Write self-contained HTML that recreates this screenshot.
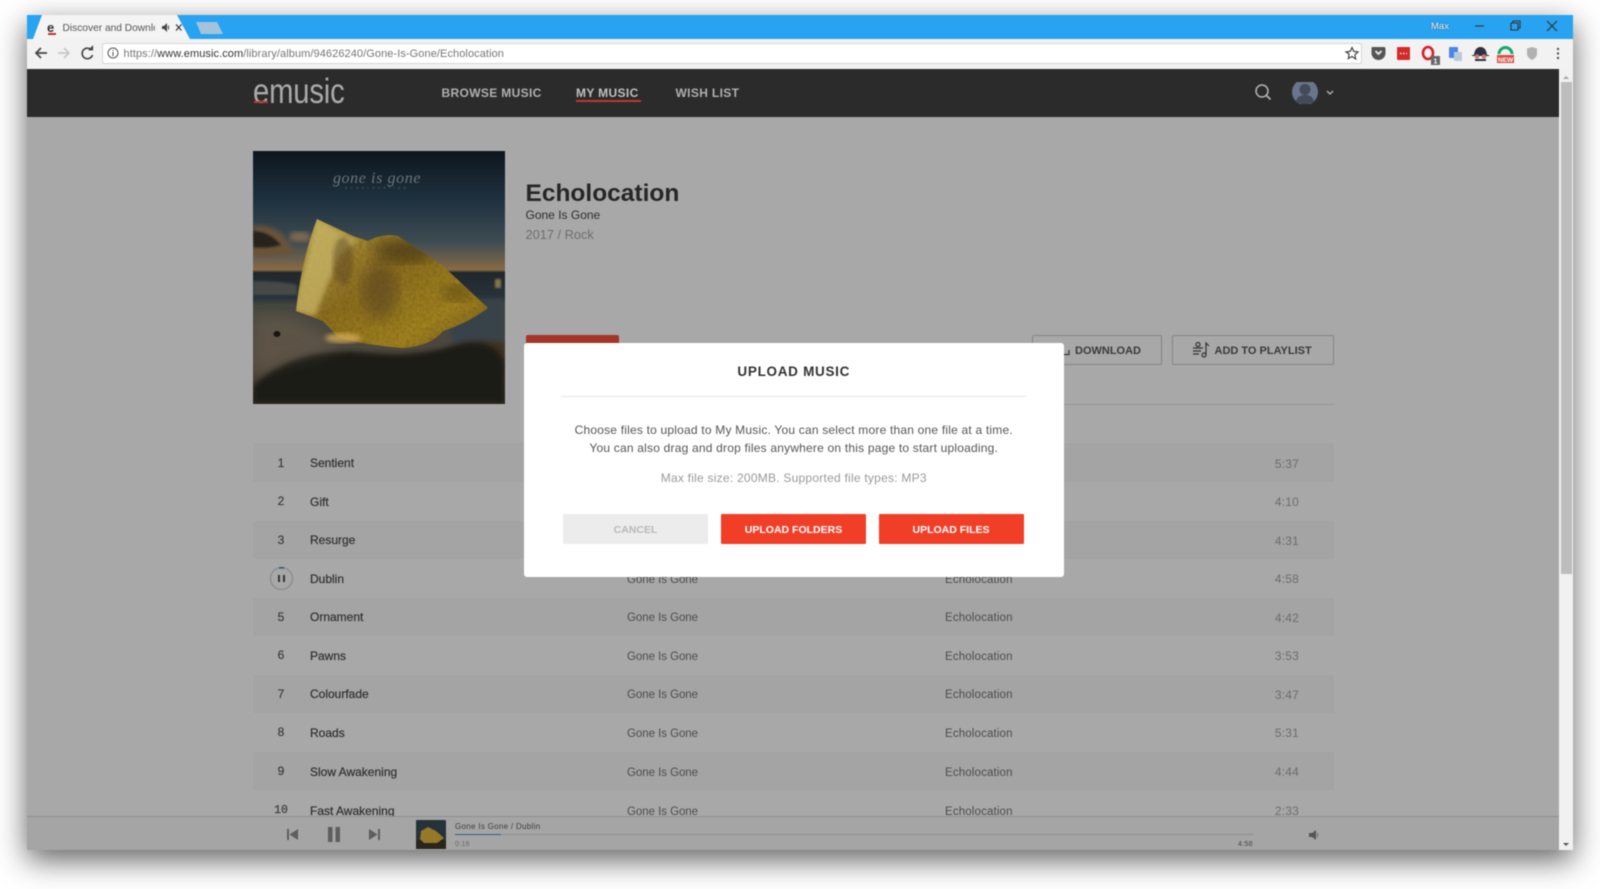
<!DOCTYPE html>
<html><head><meta charset="utf-8"><title>Discover and Download</title>
<style>
html,body{margin:0;padding:0;width:1600px;height:889px;overflow:hidden;background:#fff;font-family:"Liberation Sans",sans-serif}
#stage{position:absolute;left:0;top:0;width:1600px;height:889px;filter:blur(.45px)}
#win{position:absolute;left:27px;top:15px;width:1546px;height:835px;box-shadow:0 10px 28px rgba(0,0,0,.62);background:#a8a8a8}
.a{position:absolute;white-space:nowrap}
.t{position:absolute;white-space:nowrap;line-height:16px;height:16px}
.row{position:absolute;left:253px;width:1081px;height:38.5px}
.title{color:#303030;font-size:12px;left:310px;letter-spacing:0;-webkit-text-stroke:.2px #303030;margin-top:.5px}
.num{color:#3c3c3c;font-size:12px;width:20px;text-align:center;left:271px;-webkit-text-stroke:.2px #3c3c3c}
.art{color:#4c4c4c;font-size:11.5px;left:627px;letter-spacing:-.05px;margin-top:1.5px}
.alb{color:#4c4c4c;font-size:11.5px;left:945px;letter-spacing:.15px;margin-top:1.5px}
.dur{color:#6c6c6c;font-size:12px;width:40px;text-align:right;left:1259px;letter-spacing:.2px}
.nav{color:#b0b0b0;font-size:12px;font-weight:bold;letter-spacing:.35px;top:84.5px}
.btn{position:absolute;box-sizing:border-box;border:1px solid #848484;border-radius:2px;height:30px;top:335px;color:#3a3a3a;font-size:11px;letter-spacing:0;font-weight:bold;line-height:30px}
.mb{position:absolute;top:513.5px;width:145px;height:30.5px;line-height:32.5px;text-align:center;font-size:10.5px;font-weight:bold;border-radius:1px;letter-spacing:0}
</style></head><body>
<div id="stage">
<div id="win"></div>
<!-- tab strip -->
<div class="a" style="left:27px;top:15px;width:1546px;height:24px;background:#27a3f1"></div>
<svg class="a" style="left:27px;top:15px" width="240" height="24">
<path d="M6 24 L15 0 L150 0 L163 24Z" fill="#f4f4f4"/>
<path d="M169 7 L190 7 L196 19 L174 19Z" fill="#a3c3dc"/>
</svg>
<div class="t" style="left:47px;top:20px;width:10px;color:#333;font-size:13px;font-weight:bold">e</div>
<div class="a" style="left:47.5px;top:33px;width:8px;height:1.5px;background:#c7332a"></div>
<div class="t" style="left:62.5px;top:20.500px;color:#555;font-size:10.2px;width:92px;overflow:hidden">Discover and Downlo</div>
<svg class="a" style="left:161px;top:22px" width="30" height="12"><path d="M1 4h2l3-3v9l-3-3H1z" fill="#444"/><path d="M7.5 3.5v4" stroke="#444"/><path d="M15 2.5l5.5 6M20.5 2.5l-5.5 6" stroke="#333" stroke-width="1.2" fill="none"/></svg>
<div class="t" style="left:1431px;top:19px;color:#f4f4f4;font-size:9.500px;text-shadow:0 0 1.500px #345">Max</div>
<svg class="a" style="left:1470px;top:18px" width="95" height="16" fill="none" stroke="#333" stroke-width="1.1">
<path d="M5 8h9"/><path d="M41 5h7v7h-7zM43 5V3h7v7h-2"/><path d="M77 3l10 10M87 3L77 13" stroke-width="1.2"/>
</svg>
<!-- toolbar -->
<div class="a" style="left:27px;top:38.5px;width:1546px;height:30px;background:#f2f2f2"></div>
<svg class="a" style="left:33px;top:44px" width="70" height="18" fill="none" stroke="#444" stroke-width="1.7">
<path d="M14 9H3M8 4L3 9l5 5"/><path d="M36 9H25M31 4l5 5-5 5" stroke="#c8c8c8"/>
<path d="M58 5.5A5.3 5.3 0 1 0 59.500 11" stroke-width="1.6"/><path d="M55.500 5.800h4v-4" stroke-width="1.2" fill="#444"/>
</svg>
<div class="a" style="left:102px;top:42.5px;width:1260px;height:21px;box-sizing:border-box;background:#fff;border:1px solid #d4d4d4;border-radius:2px"></div>
<svg class="a" style="left:106px;top:46px" width="14" height="14"><circle cx="7" cy="7" r="5" fill="none" stroke="#555"/><path d="M7 6v4M7 4v1" stroke="#555" stroke-width="1.1"/></svg>
<div class="t" style="left:123.5px;top:45.5px;color:#777;font-size:11px;letter-spacing:.08px">https://<span style="color:#333">www.emusic.com</span>/library/album/94626240/Gone-Is-Gone/Echolocation</div>
<svg class="a" style="left:1343px;top:44px" width="225" height="22">
<path d="M9 3.5l1.8 3.9 4.2.5-3.1 2.9.8 4.2L9 12.5l-3.7 2 .8-4.2L3 7.9l4.2-.5z" fill="none" stroke="#444" stroke-width="1.2"/>
<path d="M29 3h12q1.500 0 1.500 2v4a7 7 0 0 1-14 0V5q0-2 .5-2z" fill="#555"/><path d="M32.500 7l3 3 3-3" stroke="#eee" stroke-width="1.8" fill="none"/>
<rect x="54" y="3" width="13" height="13" rx="1" fill="#d42a2a"/><path d="M57 9.500h1.500M60 9.500h1.500M63 9.500h1" stroke="#fff" stroke-width="1.300"/>
<ellipse cx="85" cy="9" rx="5" ry="6" fill="none" stroke="#d8202b" stroke-width="2.600"/><rect x="88" y="12" width="9" height="9" fill="#666"/><text x="90.500" y="19.500" font-size="7" font-weight="bold" fill="#fff" font-family="Liberation Sans">1</text>
<rect x="106" y="3" width="9" height="11" rx="1" fill="#4a86e8"/><rect x="111" y="8" width="8" height="9" fill="#bbc9dd"/>
<path d="M131 11q1-8 6.500-8t6.500 8zM129 11h17v1h-17z" fill="#2d3142"/><circle cx="134" cy="12.500" r="2.300" fill="#c77" /><circle cx="141" cy="12.500" r="2.300" fill="#c77"/><path d="M132 16h11" stroke="#2d3142" stroke-width="2"/>
<path d="M156 10a6.500 6.500 0 0 1 13 0" fill="none" stroke="#15a86b" stroke-width="3"/><rect x="154" y="11" width="17" height="8" fill="#dc4b3e"/><text x="155" y="18" font-size="6.500" font-weight="bold" fill="#fff" font-family="Liberation Sans">NEW</text>
<path d="M184 4.500l5-1.500 5 1.500v5q0 4-5 6.500-5-2.500-5-6.500z" fill="#b0b0b0"/>
<circle cx="215" cy="5" r="1.200" fill="#555"/><circle cx="215" cy="9.500" r="1.200" fill="#555"/><circle cx="215" cy="14" r="1.200" fill="#555"/>
</svg>
<!-- nav -->
<div class="a" style="left:27px;top:68.500px;width:1532px;height:48px;background:#2b2b2b"></div>
<div class="t" style="left:253px;top:74px;height:36px;line-height:36px;color:#aaa;font-size:35px;letter-spacing:-.2px;transform-origin:0 50%;transform:scale(.835,1)">emusic</div>
<div class="a" style="left:254px;top:100.500px;width:14px;height:2.500px;background:#b93a30"></div>
<div class="t nav" style="left:441.500px">BROWSE MUSIC</div>
<div class="t nav" style="left:576px;color:#c0c0c0">MY MUSIC</div>
<div class="a" style="left:576px;top:99.500px;width:65px;height:2px;background:#c2362b"></div>
<div class="t nav" style="left:675.500px">WISH LIST</div>
<svg class="a" style="left:1252px;top:82px" width="90" height="22">
<circle cx="10" cy="9" r="6" fill="none" stroke="#b5b5b5" stroke-width="1.500"/><path d="M14.500 13.500l4 4" stroke="#b5b5b5" stroke-width="1.700"/>
<circle cx="53" cy="10" r="13" fill="#69758a"/><circle cx="53" cy="7.500" r="5.500" fill="#434a58"/><path d="M44 20q1-7 9-7t9 7l-9 3z" fill="#434a58"/>
<path d="M75 9l3 3 3-3" fill="none" stroke="#aaa" stroke-width="1.500"/>
</svg>
<!-- scrollbar -->
<div class="a" style="left:1559px;top:68.500px;width:14px;height:781.500px;background:#f1f1f1"></div>
<div class="a" style="left:1560.500px;top:82px;width:11px;height:492px;background:#bdbdbd"></div>
<svg class="a" style="left:1559px;top:70px" width="14" height="780"><path d="M4 9l3-3 3 3z" fill="#a5a5a5"/><path d="M4 773l3 3 3-3z" fill="#555"/></svg>
<!-- album art -->
<svg class="a" style="left:253px;top:151px" width="252" height="253" viewBox="0 0 252 253">
<defs>
<linearGradient id="sky" x1="0" y1="0" x2="0" y2="1"><stop offset="0" stop-color="#0e161d"/><stop offset=".2" stop-color="#1f3240"/><stop offset=".36" stop-color="#3f4c52"/><stop offset=".43" stop-color="#6c5f4c"/><stop offset=".47" stop-color="#8a6a44"/><stop offset=".48" stop-color="#20282d"/><stop offset=".58" stop-color="#28323a"/><stop offset=".61" stop-color="#45463f"/><stop offset=".85" stop-color="#4f483e"/><stop offset="1" stop-color="#38332b"/></linearGradient>
<linearGradient id="rock" x1="0" y1="0" x2="1" y2="1"><stop offset="0" stop-color="#b89f48"/><stop offset=".45" stop-color="#8c6e22"/><stop offset=".75" stop-color="#a08224"/><stop offset="1" stop-color="#6f541a"/></linearGradient>
<filter id="tx" x="0" y="0" width="100%" height="100%"><feTurbulence type="fractalNoise" baseFrequency=".3" numOctaves="2" seed="3"/><feColorMatrix values="0 0 0 0 0 0 0 0 0 0 0 0 0 0 0 .5 0 0 0 -.16"/><feComposite in2="SourceGraphic" operator="in"/><feMerge><feMergeNode in="SourceGraphic"/><feMergeNode/></feMerge></filter>
<filter id="b1"><feGaussianBlur stdDeviation="1"/></filter><filter id="b2"><feGaussianBlur stdDeviation="2.500"/></filter><filter id="b5"><feGaussianBlur stdDeviation="7"/></filter>
<clipPath id="rc"><path d="M64 68L100 85L115 90Q130 82 145 85L190 115L235 157Q215 172 190 180Q178 195 150 197Q110 194 85 186L70 170L43 160Q48 110 64 68Z"/></clipPath>
<clipPath id="all"><rect width="252" height="253"/></clipPath>
</defs>
<g clip-path="url(#all)">
<rect width="252" height="253" fill="url(#sky)"/>
<path d="M0 75q25-3 38 20l3 6q-20 6-41 3z" fill="#6a5238" filter="url(#b2)"/>
<path d="M0 80q16 0 28 14-14 4-28 2z" fill="#27241f" filter="url(#b1)"/>
<path d="M37 82q12-3 20 1v7q-10 2-20-1z" fill="#7c6850" filter="url(#b2)"/>
<path d="M190 148H252V195H200z" fill="#38424a" filter="url(#b2)"/>
<path d="M0 130q30 0 44 4v10H0z" fill="#55544f" opacity=".7" filter="url(#b1)"/>
<path d="M190 200q30-15 62-8v30z" fill="#3c3122" filter="url(#b2)"/>
<path d="M0 235Q25 212 53 205T120 202T200 195T252 212V253H0z" fill="#1e1a14" filter="url(#b2)"/>
<path d="M0 165q30-5 50 5l40 25-90 25z" fill="#6e6150" opacity=".5" filter="url(#b5)"/>
<path d="M64 68L100 85L115 90Q130 82 145 85L190 115L235 157Q215 172 190 180Q178 195 150 197Q110 194 85 186L70 170L43 160Q48 110 64 68Z" fill="url(#rock)" filter="url(#tx)"/>
<g clip-path="url(#rc)">
<path d="M64 68L105 90Q85 100 78 125L62 165L40 160Z" fill="#c8b566" opacity=".75" filter="url(#b2)"/>
<ellipse cx="127" cy="140" rx="18" ry="28" fill="#5a4520" opacity=".6" filter="url(#b5)"/>
<ellipse cx="150" cy="100" rx="30" ry="12" fill="#4a3918" opacity=".75" filter="url(#b5)"/>
<ellipse cx="205" cy="142" rx="16" ry="8" fill="#4a3918" opacity=".55" filter="url(#b5)"/>
<ellipse cx="90" cy="110" rx="10" ry="24" fill="#5a4520" opacity=".5" filter="url(#b2)"/>
</g>
<ellipse cx="90" cy="187" rx="18" ry="5" fill="#d4aa55" opacity=".8" filter="url(#b2)"/>
<ellipse cx="24" cy="183" rx="3.500" ry="3" fill="#17130f"/>
<rect x="242" y="128" width="6" height="9" fill="#85764f" filter="url(#b1)"/>
<text x="124" y="32" text-anchor="middle" font-family="Liberation Serif" font-style="italic" font-size="16" letter-spacing=".6" fill="#8fa0a6" opacity=".65">gone is gone</text>
<text x="124" y="38" text-anchor="middle" font-family="Liberation Sans" font-size="3.500" letter-spacing="3" fill="#56666e">ECHOLOCATION</text>
</g>
</svg>
<!-- head -->
<div class="t" style="left:525.500px;top:179.500px;height:28px;line-height:28px;color:#262626;font-size:24.500px;font-weight:bold">Echolocation</div>
<div class="t" style="left:525.500px;top:206.500px;color:#2e2e2e;font-size:12px">Gone Is Gone</div>
<div class="t" style="left:525.500px;top:227px;color:#6f6f6f;font-size:12.800px">2017 / Rock</div>
<div class="a" style="left:525.500px;top:335px;width:93px;height:14px;background:#a3352a;border-radius:2px 2px 0 0"></div>
<div class="btn" style="left:1032px;width:129.500px;padding-left:42px">DOWNLOAD</div>
<div class="btn" style="left:1171.500px;width:162.500px;padding-left:42px">ADD TO PLAYLIST</div>
<svg class="a" style="left:1192px;top:341px" width="20" height="18" fill="none" stroke="#333" stroke-width="1.200"><circle cx="6" cy="3.500" r="2"/><path d="M1 7h10M1 10h8M1 13h6"/><path d="M14 14V2l3 3"/><circle cx="12" cy="14" r="2"/></svg>
<div class="a" style="left:525px;top:404px;width:809px;height:1px;background:#959595"></div>
<!-- rows -->
<div class="row" style="top:443px;background:#a4a4a4"></div>
<div class="row" style="top:520.500px;background:#a4a4a4"></div>
<div class="row" style="top:597.500px;background:#a4a4a4"></div>
<div class="row" style="top:674.500px;background:#a4a4a4"></div>
<div class="row" style="top:751.500px;background:#a4a4a4"></div>

<div class="t num" style="top:454.500px">1</div><div class="t title" style="top:454.500px">Sentient</div><div class="t dur" style="top:455.500px">5:37</div>
<div class="t num" style="top:493px">2</div><div class="t title" style="top:493px">Gift</div><div class="t dur" style="top:494px">4:10</div>
<div class="t num" style="top:531.500px">3</div><div class="t title" style="top:531.500px">Resurge</div><div class="t dur" style="top:532.500px">4:31</div>
<svg class="a" style="left:269px;top:566px" width="25" height="25"><circle cx="12.500" cy="12.500" r="11" fill="none" stroke="#8e8e8e" stroke-width="1.500"/><path d="M10 2q2.500-.500 5 0" stroke="#2f5a6a" stroke-width="1.500" fill="none"/><path d="M10 9v7M15 9v7" stroke="#333" stroke-width="2"/></svg>
<div class="t title" style="top:570px">Dublin</div><div class="t art" style="top:570px">Gone Is Gone</div><div class="t alb" style="top:570px">Echolocation</div><div class="t dur" style="top:571px">4:58</div>
<div class="t num" style="top:608.500px">5</div><div class="t title" style="top:608.500px">Ornament</div><div class="t art" style="top:608.500px">Gone Is Gone</div><div class="t alb" style="top:608.500px">Echolocation</div><div class="t dur" style="top:609.500px">4:42</div>
<div class="t num" style="top:647px">6</div><div class="t title" style="top:647px">Pawns</div><div class="t art" style="top:647px">Gone Is Gone</div><div class="t alb" style="top:647px">Echolocation</div><div class="t dur" style="top:648px">3:53</div>
<div class="t num" style="top:685.500px">7</div><div class="t title" style="top:685.500px">Colourfade</div><div class="t art" style="top:685.500px">Gone Is Gone</div><div class="t alb" style="top:685.500px">Echolocation</div><div class="t dur" style="top:686.500px">3:47</div>
<div class="t num" style="top:724px">8</div><div class="t title" style="top:724px">Roads</div><div class="t art" style="top:724px">Gone Is Gone</div><div class="t alb" style="top:724px">Echolocation</div><div class="t dur" style="top:725px">5:31</div>
<div class="t num" style="top:763px">9</div><div class="t title" style="top:763px">Slow Awakening</div><div class="t art" style="top:763px">Gone Is Gone</div><div class="t alb" style="top:763px">Echolocation</div><div class="t dur" style="top:764px">4:44</div>
<div class="t num" style="top:803px;font-family:'Liberation Mono',monospace;font-size:11.500px">10</div><div class="t title" style="top:802px">Fast Awakening</div><div class="t art" style="top:802px">Gone Is Gone</div><div class="t alb" style="top:802px">Echolocation</div><div class="t dur" style="top:803px">2:33</div>
<!-- player -->
<div class="a" style="left:27px;top:816px;width:1532px;height:34px;background:#a5a5a5;border-top:1px solid #8f8f8f;box-sizing:border-box"></div>
<svg class="a" style="left:285px;top:825px" width="100" height="20" fill="#5e5e5e"><path d="M2 4h2v11H2zM13 4v11L4.500 9.500z"/><rect x="43" y="2" width="4.500" height="15"/><rect x="50.500" y="2" width="4.500" height="15"/><path d="M84 4v11l8.500-5.500zM93 4h2v11h-2z"/></svg>
<svg class="a" style="left:416px;top:820px" width="30" height="29"><rect width="30" height="29" rx="1" fill="#26323a"/><rect y="20" width="30" height="9" fill="#2a261d"/><path d="M5 11L12 7l8 4 8 7-7 5H8L4 19z" fill="#957828"/></svg>
<div class="t" style="left:455px;top:818.500px;color:#3e3e3e;font-size:8px;letter-spacing:.3px">Gone Is Gone / Dublin</div>
<div class="a" style="left:455px;top:834px;width:798px;height:1px;background:#8e8e8e"></div>
<div class="a" style="left:455px;top:833.500px;width:46px;height:1.500px;background:#2f6272"></div>
<div class="t" style="left:455px;top:836.500px;color:#666;font-size:7px;letter-spacing:.3px">0:16</div>
<div class="t" style="left:1238px;top:836.500px;color:#444;font-size:7px;letter-spacing:.3px">4:58</div>
<svg class="a" style="left:1308px;top:829px" width="12" height="12"><path d="M1 4h3l4-3v10L4 8H1z" fill="#555"/><path d="M9.500 4v4" stroke="#666"/></svg>
<!-- modal -->
<div class="a" style="left:523.500px;top:343px;width:540.500px;height:233.500px;background:#fff;border-radius:3px"></div>
<svg class="a" style="left:1060px;top:345px" width="14" height="14" fill="none" stroke="#333" stroke-width="1.200"><path d="M4 9.500h5V5"/></svg>
<div class="a" style="left:523.500px;top:362.500px;width:540.500px;text-align:center;color:#333;font-size:13.500px;font-weight:bold;letter-spacing:.7px;line-height:17px">UPLOAD MUSIC</div>
<div class="a" style="left:561px;top:395.500px;width:465px;height:1px;background:#e4e4e4"></div>
<div class="a" style="left:523.500px;top:420.500px;width:540.500px;text-align:center;color:#555;font-size:12px;letter-spacing:.2px;line-height:18px">Choose files to upload to My Music. You can select more than one file at a time.<br>You can also drag and drop files anywhere on this page to start uploading.</div>
<div class="a" style="left:523.500px;top:470px;width:540.500px;text-align:center;color:#999;font-size:12px;letter-spacing:.24px;line-height:16px">Max file size: 200MB. Supported file types: MP3</div>
<div class="mb" style="left:563px;background:#ececec;color:#b8b8b8">CANCEL</div>
<div class="mb" style="left:721px;background:#f03e27;color:#fff">UPLOAD FOLDERS</div>
<div class="mb" style="left:878.500px;background:#f03e27;color:#fff">UPLOAD FILES</div>
</div>
</body></html>
